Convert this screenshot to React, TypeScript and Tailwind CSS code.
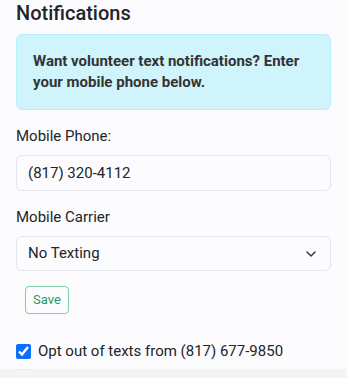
import React, { useState } from 'react';

export default function App(): React.ReactElement {
  const [phone, setPhone] = useState<string>('(817) 320-4112');
  const [carrier, setCarrier] = useState<string>('none');
  const [optOut, setOptOut] = useState<boolean>(true);

  return (
    <div className="min-h-[378px] bg-[#fcfcfe] text-[#212529] font-['Roboto',sans-serif]">
      <div className="px-4 pb-[5px]">
        <h2 className="text-[20px] font-medium leading-[26px]">Notifications</h2>
        <div className="mt-[8px] rounded-md border border-[#b6effb] bg-[#cff4fc] px-4 py-4 text-[15px] font-bold leading-[21px] text-[#333333]">
          Want volunteer text notifications? Enter your mobile phone below.
        </div>

        <label htmlFor="phone" className="mt-[15px] block text-[15px] leading-[22px]">
          Mobile Phone:
        </label>
        <input
          id="phone"
          type="text"
          value={phone}
          onChange={e => setPhone(e.target.value)}
          className="mt-[8px] block h-[36px] w-full rounded-md border border-[#e3e4ea] bg-[#fcfcfe] px-[11px] text-[15px] text-[#212529] outline-none"
        />

        <label htmlFor="carrier" className="mt-[15px] block text-[15px] leading-[22px]">
          Mobile Carrier
        </label>
        <div className="relative mt-[8px]">
          <select
            id="carrier"
            value={carrier}
            onChange={e => setCarrier(e.target.value)}
            className="block h-[35px] w-full appearance-none rounded-md border border-[#e3e4ea] bg-[#fcfcfe] px-[11px] text-[15px] text-[#212529] outline-none"
          >
            <option value="none">No Texting</option>
            <option value="att">AT&amp;T</option>
            <option value="verizon">Verizon</option>
            <option value="tmobile">T-Mobile</option>
          </select>
          <svg
            className="pointer-events-none absolute right-[15px] top-1/2 -translate-y-1/2"
            width="10"
            height="6"
            viewBox="0 0 10 6"
            fill="none"
            stroke="#343a40"
            strokeWidth="1.5"
            strokeLinecap="round"
            strokeLinejoin="round"
          >
            <path d="M1 1l4 4 4-4" />
          </svg>
        </div>

        <div className="pl-[9px] pt-[15px]">
          <button
            type="button"
            className="h-[28px] w-[44px] rounded-[4px] border border-[#7fd0a8] text-[13px] text-[#2a9a63]"
          >
            Save
          </button>
        </div>

        <label className="mt-[25px] flex items-center gap-[7px] text-[15px] leading-[24px]">
          <input
            type="checkbox"
            checked={optOut}
            onChange={e => setOptOut(e.target.checked)}
            className="h-[15px] w-[15px] accent-[#0d6efd]"
          />
          Opt out of texts from (817) 677-9850
        </label>
      </div>
      <div className="h-[9px] bg-[#f4f3f6] px-4">
        <div className="mt-[1px] h-[2px] w-[15px] rounded-t-sm border border-b-0 border-[#e9e7ea]" />
      </div>
    </div>
  );
}
